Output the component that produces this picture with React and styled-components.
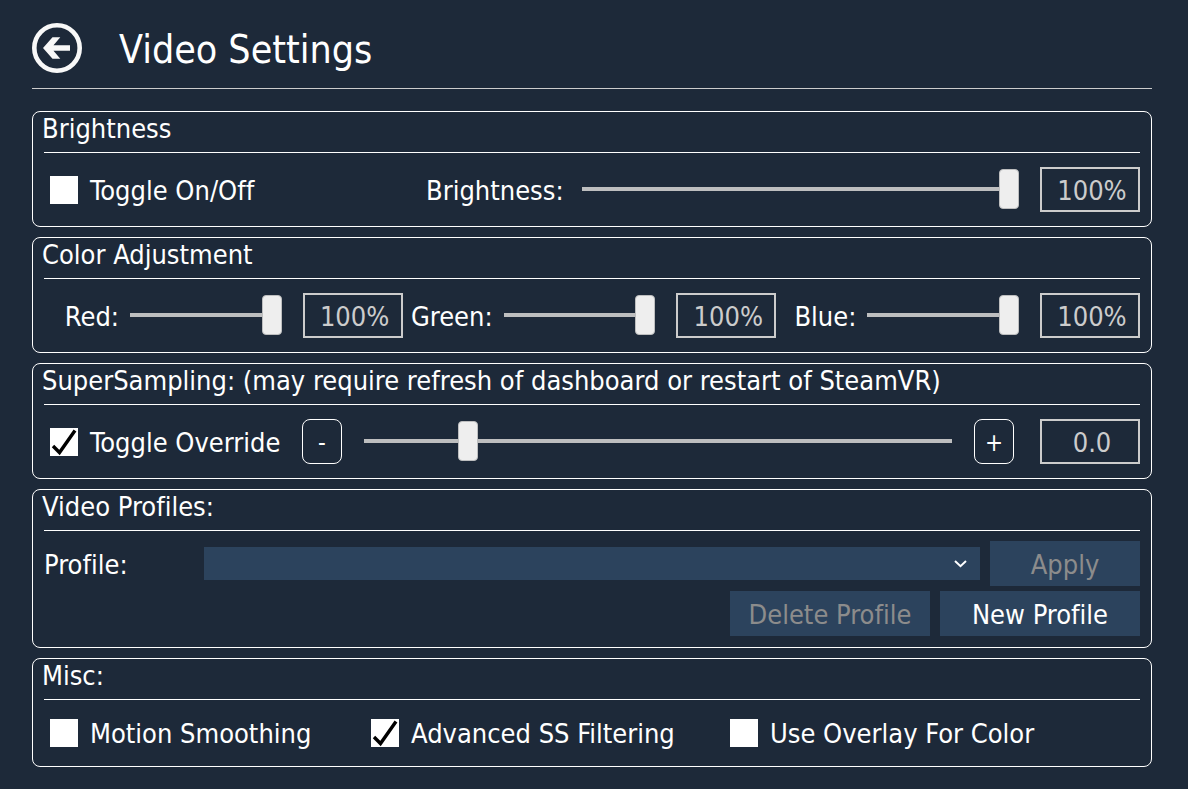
import React, { useState } from 'react';
import styled, { createGlobalStyle } from 'styled-components';

const GlobalStyle = createGlobalStyle`
  * {
    box-sizing: border-box;
  }
  body {
    margin: 0;
    background-color: #1d2939;
  }
  body, button, input, select {
    font-family: Tahoma, 'DejaVu Sans Condensed', 'DejaVu Sans', sans-serif;
    font-size: 27px;
    font-variant-ligatures: none;
    color: #ffffff;
  }
`;

const Page = styled.main`
  padding: 20px 36px 22px 32px;
`;

const Header = styled.header`
  display: flex;
  align-items: center;
  gap: 37px;
  height: 69px;
  padding-bottom: 12px;
  border-bottom: 1px solid #cccccc;
  margin-bottom: 22px;
`;

const BackButton = styled.button`
  display: flex;
  padding: 0;
  border: none;
  background: none;
  cursor: pointer;
`;

const PageTitle = styled.h1`
  margin: 0;
  padding-top: 4px;
  font-size: 39px;
  line-height: 52px;
  font-weight: normal;
`;

const Sections = styled.div`
  display: flex;
  flex-direction: column;
  gap: 10px;
`;

const Panel = styled.section`
  border: 1px solid #ffffff;
  border-radius: 8px;
`;

const PanelTitle = styled.h2`
  margin: 0;
  padding: 0 9px 6px;
  font-size: 27px;
  line-height: 34px;
  font-weight: normal;
`;

const PanelBody = styled.div`
  margin: 0 11px;
  padding: ${(props) => props.$padding || '14px 0'};
  border-top: 1px solid #ffffff;
`;

const Row = styled.div`
  display: flex;
  align-items: center;
`;

const ColorGrid = styled.div`
  display: grid;
  grid-template-columns: 75px 1fr 100px 90px 1fr 100px 80px 1fr 100px;
  align-items: center;
`;

const MiscGrid = styled.div`
  display: grid;
  grid-template-columns: 321fr 359fr 416fr;
  align-items: center;
`;

const ToggleLabel = styled.label`
  display: flex;
  align-items: center;
  gap: 12px;
  flex: 0 0 ${(props) => props.$width || 'auto'};
  height: 28px;
  padding-left: 6px;
  white-space: nowrap;
`;

const ToggleText = styled.span`
  padding-top: 2px;
  line-height: 34px;
`;

const CheckBoxWrap = styled.span`
  display: grid;
  width: 28px;
  height: 28px;

  & > * {
    grid-area: 1 / 1;
  }
  svg {
    pointer-events: none;
  }
`;

const CheckBoxInput = styled.input`
  appearance: none;
  width: 28px;
  height: 28px;
  margin: 0;
  background-color: #ffffff;
`;

const Label = styled.label`
  padding-top: 2px;
  line-height: 34px;
  white-space: nowrap;
  text-align: ${(props) => props.$align || 'left'};
  flex: 0 0 ${(props) => props.$width || 'auto'};
`;

const Slider = styled.input`
  appearance: none;
  flex: 1;
  min-width: 0;
  height: 40px;
  margin: ${(props) => props.$margin || '0 21px 2px 11px'};
  background: linear-gradient(#bdbebf, #bdbebf) center / 100% 4px no-repeat;
  border-radius: 2px;

  &::-webkit-slider-thumb {
    appearance: none;
    width: 20px;
    height: 40px;
    border: 1px solid #bdbebf;
    border-radius: 4px;
    background-color: #eeeeee;
  }
`;

const ValueBox = styled.input`
  width: 100px;
  height: 45px;
  padding: 2px 0 0 4px;
  border: 2px solid #cccccc;
  background: none;
  color: #cccccc;
  text-align: center;
`;

const SuperSamplingBox = styled(ValueBox)`
  margin-left: 26px;
`;

const StepButton = styled.button`
  width: 40px;
  height: 45px;
  padding: 2px 0 0;
  border: 1px solid #ffffff;
  border-radius: 8px;
  background: none;
  font-size: 24px;
`;

const ProfileSelectWrap = styled.div`
  display: grid;
  flex: 1;
  align-items: center;
  margin-right: 10px;

  & > * {
    grid-area: 1 / 1;
  }
  svg {
    justify-self: end;
    margin-right: 12px;
    pointer-events: none;
  }
`;

const ProfileSelect = styled.select`
  appearance: none;
  width: 100%;
  height: 33px;
  padding: 0 40px 0 8px;
  border: none;
  border-radius: 0;
  background-color: #2c435d;
`;

const Button = styled.button`
  width: ${(props) => props.$width};
  height: 45px;
  padding: 2px 0 0;
  border: none;
  background-color: #2c435d;

  &:disabled {
    color: #8c8c8c;
  }
`;

const ButtonRow = styled.div`
  display: flex;
  justify-content: flex-end;
  gap: 10px;
  margin-top: 5px;
`;

const BackIcon = () => (
  <svg width="50" height="50" viewBox="0 0 50 50" aria-hidden="true">
    <circle cx="25" cy="25" r="22.7" fill="none" stroke="#f8f8f8" strokeWidth="4.6" />
    <path
      d="M11 25 L20.5 14.3 H28.3 L21.5 22.3 H38 V27.7 H21.5 L28.3 35.7 H20.5 Z"
      fill="#f8f8f8"
    />
  </svg>
);

const Toggle = ({ label, checked, onChange, width }) => (
  <ToggleLabel $width={width}>
    <CheckBoxWrap>
      <CheckBoxInput
        type="checkbox"
        checked={checked}
        onChange={(e) => onChange(e.target.checked)}
      />
      {checked && (
        <svg width="28" height="28" viewBox="0 0 28 28" aria-hidden="true">
          <path d="M3 18 L9.5 24.5 L25 2.5" fill="none" stroke="#000000" strokeWidth="3.4" />
        </svg>
      )}
    </CheckBoxWrap>
    <ToggleText>{label}</ToggleText>
  </ToggleLabel>
);

const PercentField = ({ id, label, value, onChange, align, width, margin }) => (
  <>
    <Label htmlFor={id} $align={align} $width={width}>{label}</Label>
    <Slider
      id={id}
      type="range"
      min="0"
      max="100"
      value={value}
      $margin={margin}
      onChange={(e) => onChange(Number(e.target.value))}
    />
    <ValueBox aria-label={`${label} value`} value={`${value}%`} readOnly />
  </>
);

const App = () => {
  const [brightnessOn, setBrightnessOn] = useState(false);
  const [brightness, setBrightness] = useState(100);
  const [red, setRed] = useState(100);
  const [green, setGreen] = useState(100);
  const [blue, setBlue] = useState(100);
  const [overrideOn, setOverrideOn] = useState(true);
  const [superSampling, setSuperSampling] = useState(0.83);
  const [superSamplingText, setSuperSamplingText] = useState('0.0');
  const [motionSmoothing, setMotionSmoothing] = useState(false);
  const [filtering, setFiltering] = useState(true);
  const [overlay, setOverlay] = useState(false);

  // Keep the text box in step with the slider
  const changeSuperSampling = (value) => {
    const next = Math.min(5, Math.max(0, value));
    setSuperSampling(next);
    setSuperSamplingText(next.toFixed(1));
  };

  return (
    <Page>
      <GlobalStyle />
      <Header>
        <BackButton aria-label="Back">
          <BackIcon />
        </BackButton>
        <PageTitle>Video Settings</PageTitle>
      </Header>

      <Sections>
        <Panel>
          <PanelTitle>Brightness</PanelTitle>
          <PanelBody>
            <Row>
              <Toggle
                label="Toggle On/Off"
                width="382px"
                checked={brightnessOn}
                onChange={setBrightnessOn}
              />
              <PercentField
                id="brightness"
                label="Brightness:"
                width="137px"
                margin="0 21px 2px 18px"
                value={brightness}
                onChange={setBrightness}
              />
            </Row>
          </PanelBody>
        </Panel>

        <Panel>
          <PanelTitle>Color Adjustment</PanelTitle>
          <PanelBody>
            <ColorGrid>
              <PercentField id="red" label="Red:" align="right" value={red} onChange={setRed} />
              <PercentField id="green" label="Green:" align="right" value={green} onChange={setGreen} />
              <PercentField id="blue" label="Blue:" align="right" value={blue} onChange={setBlue} />
            </ColorGrid>
          </PanelBody>
        </Panel>

        <Panel>
          <PanelTitle>SuperSampling: (may require refresh of dashboard or restart of SteamVR)</PanelTitle>
          <PanelBody>
            <Row>
              <Toggle
                label="Toggle Override"
                width="258px"
                checked={overrideOn}
                onChange={setOverrideOn}
              />
              <StepButton onClick={() => changeSuperSampling(superSampling - 0.1)}>-</StepButton>
              <Slider
                type="range"
                aria-label="SuperSampling"
                min="0"
                max="5"
                step="0.01"
                value={superSampling}
                $margin="0 22px 2px"
                onChange={(e) => changeSuperSampling(Number(e.target.value))}
              />
              <StepButton onClick={() => changeSuperSampling(superSampling + 0.1)}>+</StepButton>
              <SuperSamplingBox
                aria-label="SuperSampling value"
                value={superSamplingText}
                onChange={(e) => setSuperSamplingText(e.target.value)}
              />
            </Row>
          </PanelBody>
        </Panel>

        <Panel>
          <PanelTitle>Video Profiles:</PanelTitle>
          <PanelBody $padding="10px 0 11px">
            <Row>
              <Label htmlFor="profile" $width="160px">Profile:</Label>
              <ProfileSelectWrap>
                <ProfileSelect id="profile" />
                <svg width="15" height="10" viewBox="0 0 15 10" aria-hidden="true">
                  <path d="M2 2 L7.5 7.2 L13 2" fill="none" stroke="#ffffff" strokeWidth="2" />
                </svg>
              </ProfileSelectWrap>
              <Button $width="150px" disabled>Apply</Button>
            </Row>
            <ButtonRow>
              <Button $width="200px" disabled>Delete Profile</Button>
              <Button $width="200px">New Profile</Button>
            </ButtonRow>
          </PanelBody>
        </Panel>

        <Panel>
          <PanelTitle>Misc:</PanelTitle>
          <PanelBody $padding="19px 0">
            <MiscGrid>
              <Toggle
                label="Motion Smoothing"
                checked={motionSmoothing}
                onChange={setMotionSmoothing}
              />
              <Toggle label="Advanced SS Filtering" checked={filtering} onChange={setFiltering} />
              <Toggle label="Use Overlay For Color" checked={overlay} onChange={setOverlay} />
            </MiscGrid>
          </PanelBody>
        </Panel>
      </Sections>
    </Page>
  );
};

export default App;
